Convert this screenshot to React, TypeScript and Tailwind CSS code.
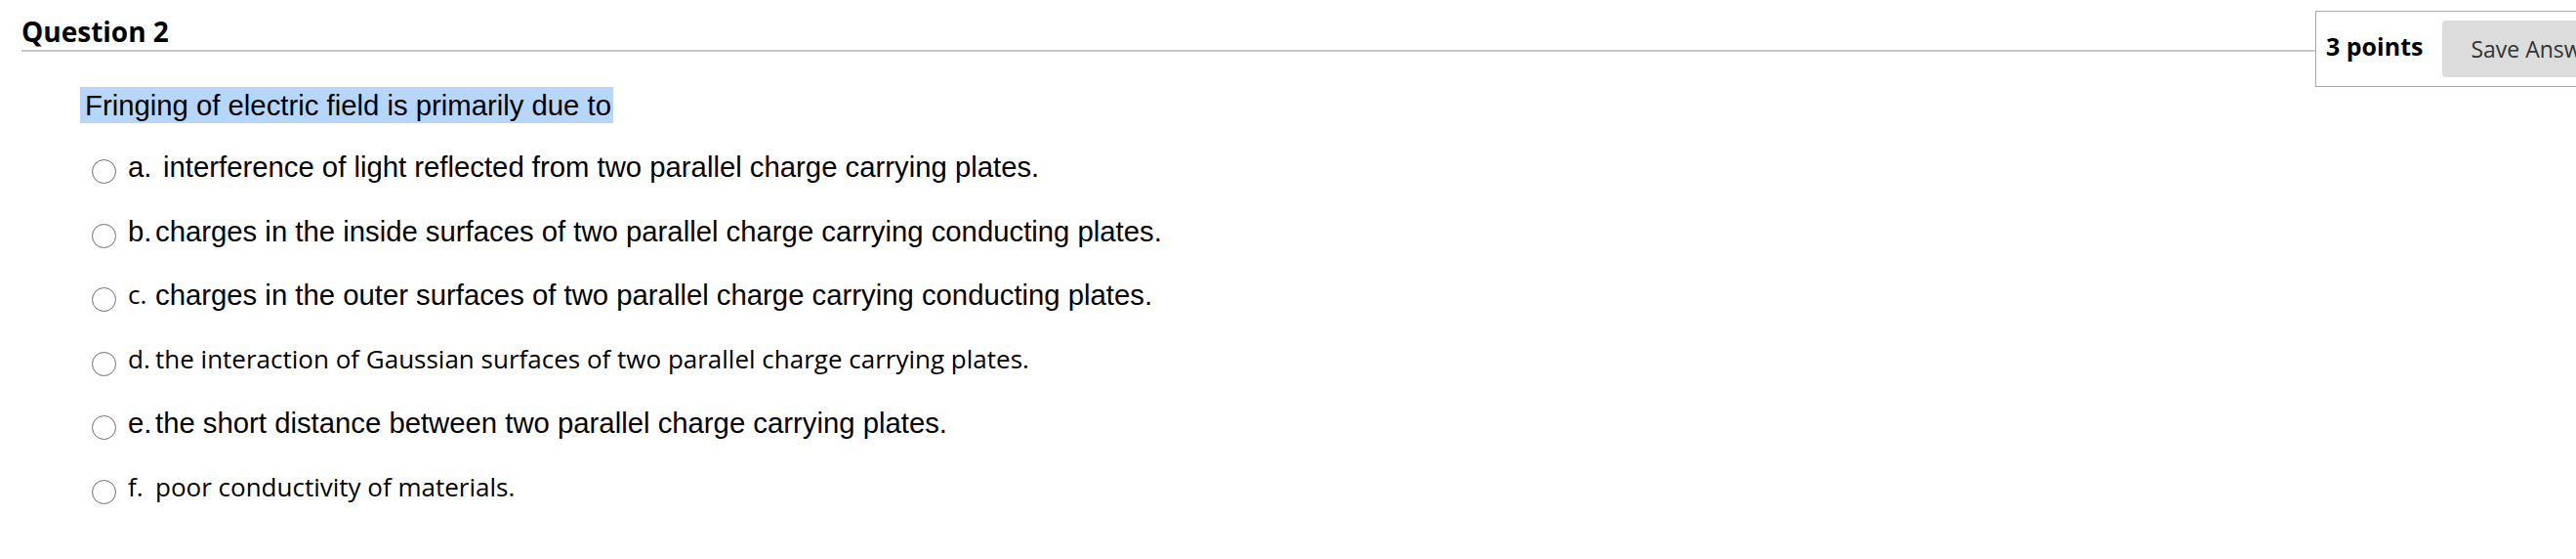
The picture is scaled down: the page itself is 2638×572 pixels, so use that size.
const arial = "font-['Liberation_Sans',Arial,sans-serif]";
const open = "font-['Open_Sans','Noto_Sans',sans-serif]";

type Choice = {
  label: string;
  text: string;
  labelFont: "arial" | "open";
  textFont: "arial" | "open";
  gap?: boolean;
};

const choices: Choice[] = [
  { label: "a.", text: "interference of light reflected from two parallel charge carrying plates.", labelFont: "arial", textFont: "arial", gap: true },
  { label: "b.", text: "charges in the inside surfaces of two parallel charge carrying conducting plates.", labelFont: "arial", textFont: "arial" },
  { label: "c.", text: "charges in the outer surfaces of two parallel charge carrying conducting plates.", labelFont: "open", textFont: "arial" },
  { label: "d.", text: "the interaction of Gaussian surfaces of two parallel charge carrying plates.", labelFont: "open", textFont: "open" },
  { label: "e.", text: "the short distance between two parallel charge carrying plates.", labelFont: "arial", textFont: "arial" },
  { label: "f.", text: "poor conductivity of materials.", labelFont: "open", textFont: "open" },
];

function fontClass(f: "arial" | "open") {
  return f === "arial" ? `${arial} text-[29.3px]` : `${open} text-[26px]`;
}

function ChoiceRow({ choice }: { choice: Choice }) {
  return (
    <label className="flex h-[65.5px] items-center text-black">
      <span className="mt-[10px] size-[25px] shrink-0 rounded-full border-[1.75px] border-[#6e6e6e] bg-white" />
      <span className={`ml-[12px] w-[28px] shrink-0 whitespace-nowrap leading-[33px] ${fontClass(choice.labelFont)}`}>
        {choice.label}
      </span>
      <span className={`whitespace-nowrap leading-[33px] ${choice.gap ? "ml-[8px]" : ""} ${fontClass(choice.textFont)}`}>
        {choice.text}
      </span>
    </label>
  );
}

export default function App() {
  return (
    <div className="h-[572px] w-[2638px] overflow-hidden bg-white pl-[22px]">
      <div className="flex items-start">
        <div className="flex-1 border-b-2 border-[#c8c8c8] pt-[13px]">
          <h3 className={`${open} text-[28px] font-bold leading-[38px] text-black`}>Question 2</h3>
        </div>
        <div className="mt-[11px] flex h-[78px] w-[267px] shrink-0 items-center border-[1.5px] border-r-0 border-[#a9a9a9] pl-[10px]">
          <span className={`${open} mb-[5px] whitespace-nowrap text-[25px] font-bold text-black`}>3 points</span>
          <button className={`${open} ml-[20px] h-[58px] shrink-0 whitespace-nowrap rounded-[4px] bg-[#dcdcdc] px-[29px] text-[23px] text-[#333]`}>
            Save Answer
          </button>
        </div>
      </div>

      <div className="ml-[60px] w-fit bg-[#b7d6fb] pl-[5px] pr-[2px]">
        <p className={`${arial} whitespace-nowrap text-[29.3px] leading-[37px] text-black`}>
          Fringing of electric field is primarily due to
        </p>
      </div>

      <div className="ml-[72px] mt-[12px] flex flex-col">
        {choices.map((c) => (
          <ChoiceRow key={c.label} choice={c} />
        ))}
      </div>
    </div>
  );
}
